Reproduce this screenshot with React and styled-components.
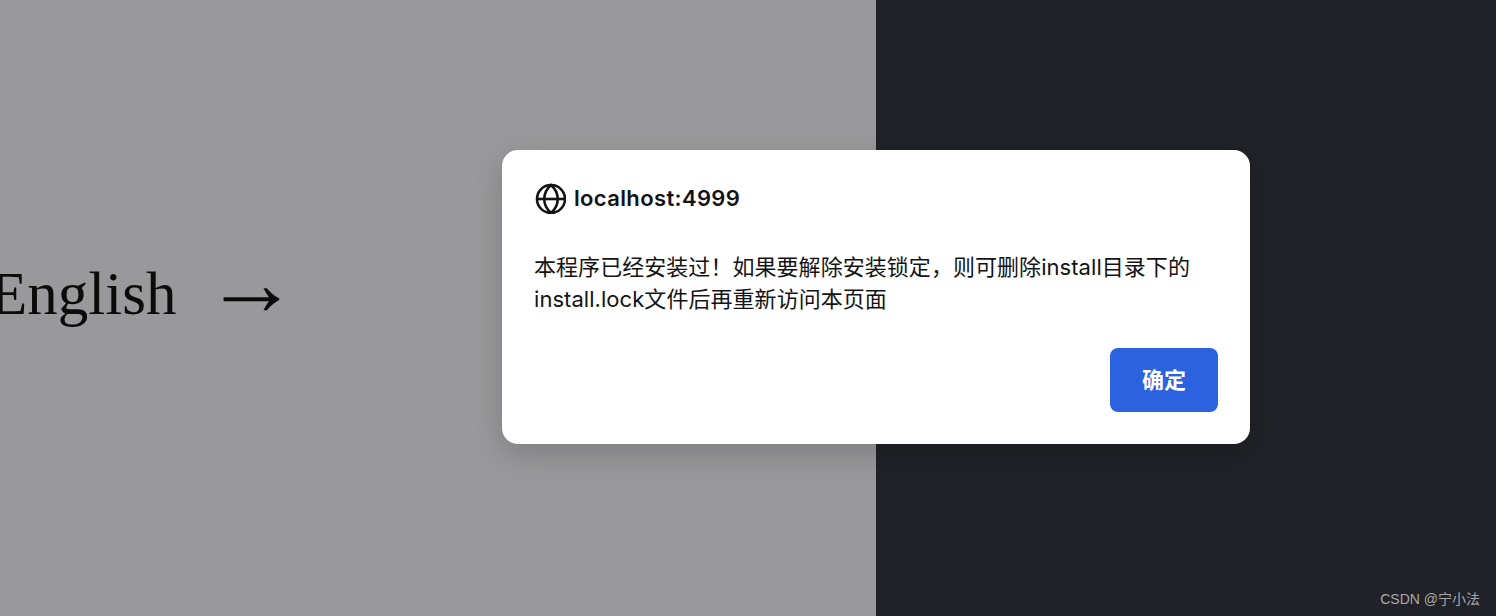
import React from 'react';
import styled, { createGlobalStyle } from 'styled-components';

const GlobalStyle = createGlobalStyle`
  html, body, #root {
    margin: 0;
    height: 100%;
  }
  body {
    overflow: hidden;
    background: #212227;
  }
`;

const Page = styled.div`
  position: relative;
  display: flex;
  height: 616px;
  width: 1496px;
  overflow: hidden;
`;

const LeftPane = styled.div`
  width: 876px;
  flex: none;
  background: #99999b;
  display: flex;
  align-items: center;
  padding-bottom: 28px;
  box-sizing: border-box;
  overflow: hidden;
`;

const LangLink = styled.div`
  display: flex;
  align-items: center;
  gap: 28px;
  margin-left: -10px;
  font-family: "Liberation Serif", "Times New Roman", serif;
  font-size: 61px;
  line-height: 68px;
  color: #0b0b0c;
  white-space: nowrap;
`;

const Arrow = styled.span`
  font-size: 94px;
  margin-bottom: 22px;
`;

const RightPane = styled.div`
  flex: 1;
  background: #212227;
`;

const Overlay = styled.div`
  position: absolute;
  inset: 0;
  display: flex;
  align-items: center;
  justify-content: center;
  padding: 0 0 22px 256px;
  box-sizing: border-box;
`;

const Dialog = styled.div`
  width: 748px;
  height: 294px;
  box-sizing: border-box;
  padding: 32px;
  background: #fff;
  border-radius: 16px;
  box-shadow: 0 10px 30px rgba(0, 0, 0, 0.18);
  display: flex;
  flex-direction: column;
  font-family: Inter, "Noto Sans CJK SC", sans-serif;
  color: #131316;
`;

const Header = styled.div`
  display: flex;
  align-items: center;
  gap: 8px;
  height: 32px;
  font-size: 22px;
  font-weight: 600;
  letter-spacing: 0.36px;
`;

const Message = styled.p`
  margin: 37px 0 0;
  font-size: 22px;
  line-height: 32px;
  width: 680px;
  letter-spacing: 0.05px;
`;

const Footer = styled.div`
  margin-top: auto;
  display: flex;
  justify-content: flex-end;
`;

const ConfirmButton = styled.button`
  width: 108px;
  height: 64px;
  border: 0;
  border-radius: 8px;
  padding: 0 0 4px;
  background: #2b62e0;
  color: #fff;
  font-family: Inter, "Noto Sans CJK SC", sans-serif;
  font-size: 22px;
  font-weight: 700;
`;

const Watermark = styled.div`
  position: absolute;
  right: 16px;
  bottom: 7px;
  font-family: "Liberation Sans", "Noto Sans CJK SC", sans-serif;
  font-size: 14px;
  line-height: 20px;
  color: #a9a9ab;
`;

const GlobeIcon = () => (
  <svg width="32" height="32" viewBox="0 0 32 32" fill="none" stroke="#131316" strokeWidth="2.6">
    <circle cx="17" cy="17" r="14" />
    <path d="M3 17h28" />
    <path d="M17 3c-9 8-9 20 0 28c9-8 9-20 0-28z" />
  </svg>
);

export default function App() {
  return (
    <>
      <GlobalStyle />
      <Page>
        <LeftPane>
          <LangLink>
            <span>English</span>
            <Arrow>→</Arrow>
          </LangLink>
        </LeftPane>
        <RightPane />
        <Overlay>
          <Dialog>
            <Header>
              <GlobeIcon />
              <span>localhost:4999</span>
            </Header>
            <Message>本程序已经安装过！如果要解除安装锁定，则可删除install目录下的install.lock文件后再重新访问本页面</Message>
            <Footer>
              <ConfirmButton>确定</ConfirmButton>
            </Footer>
          </Dialog>
        </Overlay>
        <Watermark>CSDN @宁小法</Watermark>
      </Page>
    </>
  );
}
